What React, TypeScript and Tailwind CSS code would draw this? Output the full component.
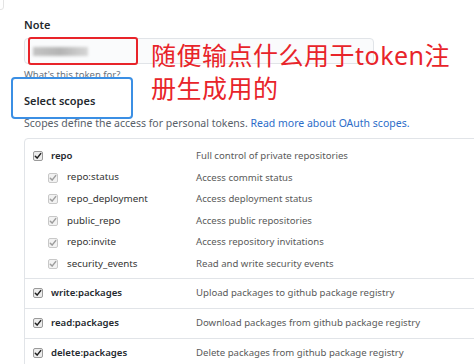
import React from "react";

function Check({ disabled }: { disabled?: boolean }) {
  return (
    <svg width="10" height="10" viewBox="0 0 10 10" className="shrink-0">
      <rect x="0.5" y="0.5" width="9" height="9" rx="1.5" fill={disabled ? "#f2f2f2" : "#ececec"} stroke={disabled ? "#c8c8c8" : "#9a9a9a"} />
      <path d="M2.3 5.2 L4.1 7.1 L7.7 2.6" fill="none" stroke={disabled ? "#9c9c9c" : "#1f1f1f"} strokeWidth="1.5" strokeLinecap="round" strokeLinejoin="round" />
    </svg>
  );
}

const subs = [
  ["repo:status", "Access commit status"],
  ["repo_deployment", "Access deployment status"],
  ["public_repo", "Access public repositories"],
  ["repo:invite", "Access repository invitations"],
  ["security_events", "Read and write security events"],
];

const pkgs = [
  ["write:packages", "Upload packages to github package registry"],
  ["read:packages", "Download packages from github package registry"],
  ["delete:packages", "Delete packages from github package registry"],
];

export default function App() {
  return (
    <div
      className="relative w-[474px] h-[364px] overflow-hidden bg-white text-[#24292e]"
      style={{ fontFamily: '"Noto Sans", "Open Sans", sans-serif' }}
    >
      {/* faint corner of element above */}
      <div className="absolute left-[-6px] top-[-6px] w-[10px] h-[16px] border border-[#e4e4e4] rounded-[3px]" />

      <div className="pl-[24px] pt-[17px]">
        <div className="text-[11px] font-semibold leading-[16px]">Note</div>
        <div className="mt-[5px] w-[350px] h-[26px] rounded-[4px] border border-[#e1e4e8] bg-[#fafbfc] flex items-center pl-[8px]">
          <div className="w-[55px] h-[9px] bg-gradient-to-r from-[#c4c4c4] via-[#b4b4b4] to-[#d6d6d6] blur-[1.5px]" />
        </div>
        <div className="mt-[5px] text-[9.5px] leading-[12px] text-[#6a737d]">What's this token for?</div>
        <div className="mt-[12px] text-[11px] font-semibold leading-[15px]">Select scopes</div>
        <div className="mt-[8px] text-[10.5px] leading-[14px] text-[#586069] whitespace-nowrap">
          Scopes define the access for personal tokens.{" "}
          <span className="text-[#2c6dc9]">Read more about OAuth scopes.</span>
        </div>

        <div className="mt-[8px] w-[470px] border border-[#e1e4e8] rounded-[4px]">
          <div className="pt-[6px] pb-[3px]">
            <div className="h-[22px] flex items-center">
              <div className="w-[26px] pl-[8px] flex"><Check /></div>
              <div className="w-[145px] text-[9.6px] font-semibold">repo</div>
              <div className="text-[9.6px] text-[#5a5a5a]">Full control of private repositories</div>
            </div>
            {subs.map(([n, d]) => (
              <div key={n} className="h-[21.6px] flex items-center">
                <div className="w-[42px] pl-[23px] flex"><Check disabled /></div>
                <div className="w-[129px] text-[9.8px] text-[#333]">{n}</div>
                <div className="text-[9.6px] text-[#5a5a5a]">{d}</div>
              </div>
            ))}
          </div>
          {pkgs.map(([n, d]) => (
            <div key={n} className="h-[30px] border-t border-[#e1e4e8] flex items-center">
              <div className="w-[26px] pl-[8px] flex"><Check /></div>
              <div className="w-[145px] text-[9.6px] font-semibold">{n}</div>
              <div className="text-[9.6px] text-[#5a5a5a]">{d}</div>
            </div>
          ))}
        </div>
      </div>

      {/* annotations */}
      <div className="absolute left-[28px] top-[37px] w-[110px] h-[28px] border-2 border-[#e8242a] rounded-[3px]" />
      <div className="absolute left-[11px] top-[77px] w-[122px] h-[42px] border-2 border-[#3b8fe4] rounded-[4px]" />
      <div
        className="absolute left-[151px] top-[39px] text-[25px] leading-[33px] tracking-[0.5px] text-[#e8242a] whitespace-nowrap"
        style={{ fontFamily: '"Noto Sans", "Noto Sans CJK SC", sans-serif' }}
      >
        <div>随便输点什么用于token注</div>
        <div>册生成用的</div>
      </div>
    </div>
  );
}
